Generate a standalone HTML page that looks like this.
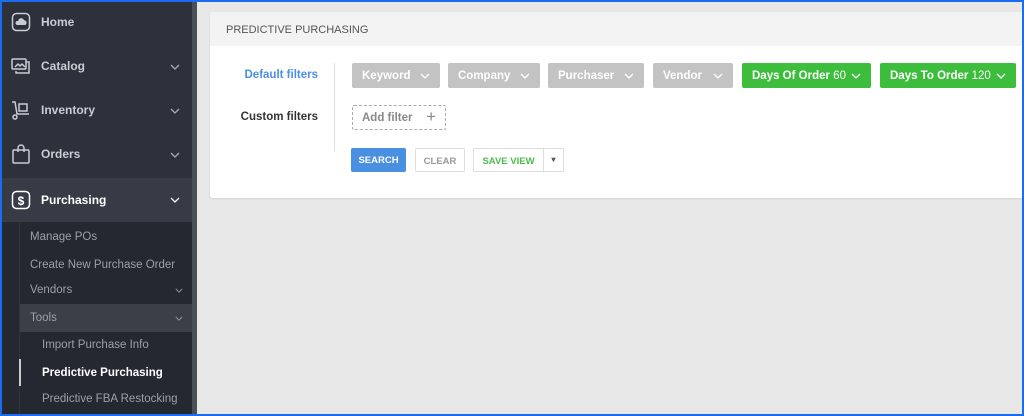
<!DOCTYPE html>
<html><head><style>
*{margin:0;padding:0;box-sizing:border-box}
body{width:1024px;height:416px;overflow:hidden;background:#e7e7e7;font-family:"Liberation Sans",sans-serif;position:relative}
.frame{position:absolute;inset:0;border:2px solid #1a6cf0;pointer-events:none;z-index:10}
.sb{position:absolute;left:0;top:0;width:197px;height:416px;background:#2c313b}
.sb .strip{position:absolute;right:0;top:0;width:5px;height:416px;background:#4a4f57}
.item{position:absolute;left:0;width:192px;height:44px;color:#c8ccd3;font-size:12px;font-weight:bold}
.item .ic{position:absolute;left:11px;top:12px;width:20px;height:20px}
.item .lb{position:absolute;left:41px;top:15px}
.cv{position:absolute;width:10px;height:6px}
.sub{position:absolute;left:0;top:222px;width:192px;height:194px;background:#242830}
.sub .t{position:absolute;font-size:11.5px;color:#9aa0aa}
.main{position:absolute;left:197px;top:0;right:0;bottom:0}
.card{position:absolute;left:13px;top:12px;width:820px;height:186px;background:#fff;border-radius:3px;box-shadow:0 1px 2px rgba(0,0,0,.08)}
.hd{height:34px;background:#f3f3f3;border-radius:3px 3px 0 0;font-size:11px;color:#555;padding:12px 0 0 16px}
.chip{position:absolute;top:63px;height:25px;border-radius:2px;color:#fff;font-size:11.5px;font-weight:bold;padding:7px 0 0 10px;background:#c3c3c3}
.chip.g{background:#3cbe3c}
.chip svg{position:absolute;right:10px;top:10px}
.btn{position:absolute;top:148px;height:24px;font-size:9.5px;font-weight:bold;text-align:center;padding-top:7px;border-radius:2px}
</style></head><body>
<svg width="0" height="0" style="position:absolute"><defs><symbol id="cv" viewBox="0 0 10 6"><path d="M1 1l4 4 4-4" fill="none" stroke="currentColor" stroke-width="1.3"/></symbol></defs></svg>
<div class="sb">
 <div class="item" style="top:0"><svg class="ic" viewBox="0 0 20 20"><rect x="1.5" y="1.5" width="17" height="17" rx="4" fill="none" stroke="#c8ccd3" stroke-width="1.5"/><path d="M6 13h8a2.5 2.5 0 0 0-1-4.8A3 3 0 0 0 7.2 9 2 2 0 0 0 6 13z" fill="#c8ccd3"/></svg><div class="lb">Home</div></div>
 <div class="item" style="top:44px"><svg class="ic" viewBox="0 0 20 20" fill="none" stroke="#c8ccd3" stroke-width="1.5"><rect x="1" y="3" width="14" height="10" rx="1"/><path d="M5 15v2h13V6h-3M4 11l3-3 2 2 2-2 3 3"/></svg><div class="lb">Catalog</div><svg class="cv" style="right:12px;top:20px;color:#aab"><use href="#cv"/></svg></div>
 <div class="item" style="top:88px"><svg class="ic" viewBox="0 0 20 20" fill="none" stroke="#c8ccd3" stroke-width="1.5"><path d="M1 2h3l2 12h12"/><rect x="8" y="4" width="8" height="7"/><circle cx="4" cy="17" r="2"/></svg><div class="lb">Inventory</div><svg class="cv" style="right:12px;top:20px;color:#aab"><use href="#cv"/></svg></div>
 <div class="item" style="top:132px"><svg class="ic" viewBox="0 0 20 20" fill="none" stroke="#c8ccd3" stroke-width="1.5"><rect x="2" y="6" width="16" height="13" rx="1"/><path d="M7 8V4a3 3 0 0 1 6 0v4"/></svg><div class="lb">Orders</div><svg class="cv" style="right:12px;top:20px;color:#aab"><use href="#cv"/></svg></div>
 <div class="item" style="top:178px;background:#363b46;color:#fff"><svg class="ic" viewBox="0 0 20 20"><rect x="1.5" y="1.5" width="17" height="17" rx="4" fill="none" stroke="#fff" stroke-width="1.5"/><text x="10" y="15" font-size="12" font-weight="bold" fill="#fff" text-anchor="middle" font-family="Liberation Sans">$</text></svg><div class="lb">Purchasing</div><svg class="cv" style="right:12px;top:19px;color:#fff"><use href="#cv"/></svg></div>
 <div class="sub">
  <div style="position:absolute;left:19px;top:0;width:1px;height:194px;background:#2e333c"></div>
  <div class="t" style="left:30px;top:9px">Manage POs</div>
  <div class="t" style="left:30px;top:37px">Create New Purchase Order</div>
  <div class="t" style="left:30px;top:62px">Vendors</div><svg class="cv" style="left:175px;top:66px;width:8px;height:5px;color:#8a909a"><use href="#cv"/></svg>
  <div style="position:absolute;left:20px;top:82px;width:172px;height:28px;background:#3a3f48"></div>
  <div class="t" style="left:30px;top:90px">Tools</div><svg class="cv" style="left:175px;top:94px;width:8px;height:5px;color:#8a909a"><use href="#cv"/></svg>
  <div class="t" style="left:42px;top:117px">Import Purchase Info</div>
  <div style="position:absolute;left:19px;top:137px;width:2px;height:27px;background:#ccc"></div>
  <div class="t" style="left:42px;top:145px;color:#fff;font-weight:bold">Predictive Purchasing</div>
  <div class="t" style="left:42px;top:171px">Predictive FBA Restocking</div>
 </div>
 <div class="strip"></div>
</div>
<div class="main">
 <div class="card">
  <div class="hd">PREDICTIVE PURCHASING</div>
  <div style="position:absolute;right:712px;top:57px;font-size:11.5px;font-weight:bold;color:#4a90e2;white-space:nowrap">Default filters</div>
  <div style="position:absolute;right:712px;top:99px;font-size:11.5px;font-weight:bold;color:#333;white-space:nowrap">Custom filters</div>
  <div style="position:absolute;left:124px;top:51px;width:1px;height:88px;background:#ddd"></div>
 </div>
</div>
<div class="chip" style="left:352px;width:88px">Keyword<svg class="cv" style="color:#fff"><use href="#cv"/></svg></div>
<div class="chip" style="left:448px;width:92px">Company<svg class="cv" style="color:#fff"><use href="#cv"/></svg></div>
<div class="chip" style="left:548px;width:96px">Purchaser<svg class="cv" style="color:#fff"><use href="#cv"/></svg></div>
<div class="chip" style="left:653px;width:80px">Vendor<svg class="cv" style="color:#fff"><use href="#cv"/></svg></div>
<div class="chip g" style="left:742px;width:129px">Days Of Order <b style="font-weight:normal">60</b><svg class="cv" style="color:#fff"><use href="#cv"/></svg></div>
<div class="chip g" style="left:880px;width:136px">Days To Order <b style="font-weight:normal">120</b><svg class="cv" style="color:#fff"><use href="#cv"/></svg></div>
<div style="position:absolute;left:352px;top:105px;width:94px;height:25px;border:1px dashed #aaa;border-radius:2px;font-size:11.5px;color:#888;font-weight:bold;padding:6px 0 0 9px">Add filter <span style="position:absolute;right:9px;top:1px;font-size:17px;font-weight:normal">+</span></div>
<div class="btn" style="left:351px;width:55px;background:#4a90e2;color:#fff">SEARCH</div>
<div class="btn" style="left:415px;width:50px;border:1px solid #ddd;color:#999;background:#fff">CLEAR</div>
<div class="btn" style="left:473px;width:71px;border:1px solid #ddd;color:#4cbb4c;background:#fff;border-radius:2px 0 0 2px">SAVE VIEW</div>
<div class="btn" style="left:543px;width:21px;border:1px solid #ddd;color:#555;background:#fff;font-size:8px;padding-top:6px">&#9662;</div>
<div class="frame"></div>
</body></html>
